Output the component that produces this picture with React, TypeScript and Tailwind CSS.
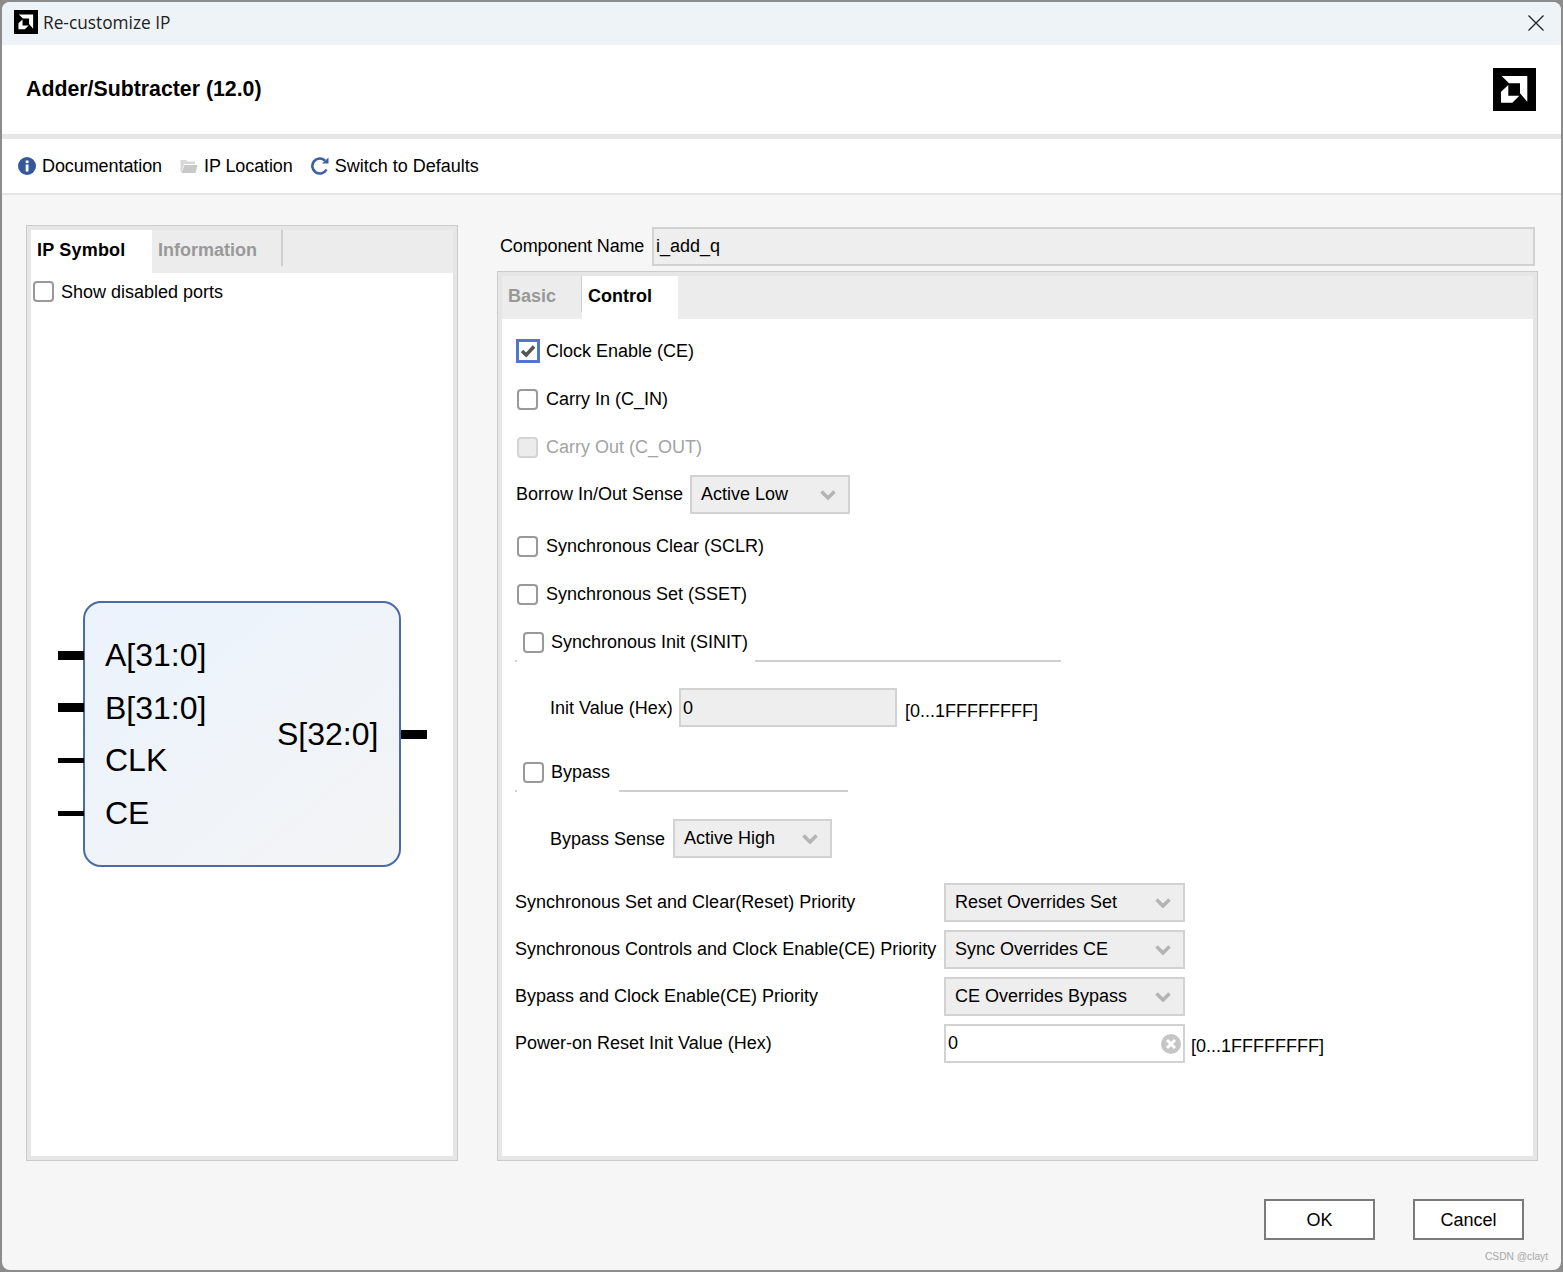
const FONT = '[font-family:"Liberation_Sans",Arial,sans-serif]';

function AmdLogo({ size }: { size: number }) {
  return (
    <svg width={size} height={size} viewBox="0 0 43 43" className="shrink-0">
      <rect width="43" height="43" fill="#000" />
      <path d="M8.7 8H34.3V33.7L27 25.3V15.3H16Z" fill="#fff" />
      <path d="M8 23.7L15.3 17V27.7H26.3L19.3 34.7H8Z" fill="#fff" />
    </svg>
  );
}

function Chevron() {
  return (
    <svg width="16" height="10" viewBox="0 0 16 10" className="shrink-0">
      <path d="M1.5 1.5L8 8L14.5 1.5" fill="none" stroke="#b4b4b4" strokeWidth="3.5" />
    </svg>
  );
}

function Box({ checked, disabled }: { checked?: boolean; disabled?: boolean }) {
  if (checked) {
    return (
      <span className="flex h-6 w-6 shrink-0 items-center justify-center border-[3px] border-[#4f78cc] bg-white">
        <svg width="16" height="14" viewBox="0 0 16 14">
          <path d="M2 7L6.2 11L14 2.5" fill="none" stroke="#555" strokeWidth="3.5" />
        </svg>
      </span>
    );
  }
  return (
    <span className={`h-[21px] w-[21px] shrink-0 rounded-[4px] border-2 ${disabled ? 'border-[#d4d4d4] bg-[#ececec]' : 'border-[#999] bg-white'}`} />
  );
}

function Check({ label, checked, disabled, className = '' }: { label: string; checked?: boolean; disabled?: boolean; className?: string }) {
  return (
    <div className={`flex h-6 items-center ${className}`}>
      <span className={`flex w-[30px] shrink-0 items-center ${checked ? '' : 'pl-[1px]'}`}>
        <Box checked={checked} disabled={disabled} />
      </span>
      <span className={disabled ? 'text-[#a3a3a3]' : ''}>{label}</span>
    </div>
  );
}

function Select({ value, className = '' }: { value: string; className?: string }) {
  return (
    <div className={`flex h-[39px] items-center justify-between border-2 border-[#d2d2d2] bg-[#eeeeee] pl-[9px] pr-[12px] ${className}`}>
      <span className="-mt-[2px]">{value}</span>
      <Chevron />
    </div>
  );
}

function SectionCheck({ label, gap, width }: { label: string; gap: number; width: number }) {
  return (
    <div>
      <Check label={label} className="pl-[7px] [&>span:first-child]:w-[29px]" />
      <div className="mt-[6px] flex h-[2px]">
        <span className="h-[2px] w-[2px] bg-[#cfcfcf]" />
        <span style={{ width: gap }} />
        <span className="h-[2px] bg-[#cfcfcf]" style={{ width }} />
      </div>
    </div>
  );
}

function Priority({ label, children }: { label: string; children: React.ReactNode }) {
  return (
    <div className="mt-2 flex items-center">
      <span className="-ml-[1px] -mt-[2px] w-[429px] shrink-0">{label}</span>
      {children}
    </div>
  );
}

function Port({ name, bus }: { name: string; bus?: boolean }) {
  return (
    <div className="flex h-[52.6px] items-center">
      <span className={`-ml-[27px] w-[26px] bg-black ${bus ? 'h-[9px]' : 'h-[5px]'}`} />
      <span className="ml-[21px] text-[32px] leading-none">{name}</span>
    </div>
  );
}

export default function App() {
  return (
    <div className={`h-[1272px] w-[1563px] overflow-hidden bg-[#8c8c8c] p-[2px] text-[18px] leading-none text-black ${FONT}`}>
      <div className="relative flex h-full flex-col overflow-hidden rounded-[8px] bg-[#f6f6f6]">
        <div className="flex h-[43px] shrink-0 items-center bg-[#eef3f7] pb-[3px] pl-[12px] pr-[17px]">
          <AmdLogo size={24} />
          <span className="ml-[5px] mt-[2px] font-['Open_Sans',sans-serif] text-[17.3px] text-[#222]">Re-customize IP</span>
          <svg width="16" height="16" viewBox="0 0 16 16" className="ml-auto mt-[2px]">
            <path d="M0.5 0.5L15.5 15.5M15.5 0.5L0.5 15.5" stroke="#222" strokeWidth="1.3" />
          </svg>
        </div>

        <div className="flex h-[89px] shrink-0 items-center justify-between bg-white pl-[24px] pr-[25px]">
          <h1 className="text-[21.3px] font-bold">Adder/Subtracter (12.0)</h1>
          <AmdLogo size={43} />
        </div>
        <div className="h-[5px] shrink-0 bg-[#e6e6e6]" />

        <div className="flex h-[54px] shrink-0 items-center bg-white pl-[16px]">
          <svg width="18" height="18" viewBox="0 0 18 18" className="mr-[6px]">
            <circle cx="9" cy="9" r="9" fill="#34589c" />
            <rect x="7.7" y="7.5" width="2.8" height="7" fill="#fff" />
            <rect x="7.7" y="3.5" width="2.8" height="2.6" fill="#fff" />
          </svg>
          <span className="tracking-[-0.08px]">Documentation</span>
          <svg width="18" height="16" viewBox="0 0 18 16" className="ml-[18px] mr-[6px]">
            <path d="M0.5 2H6L7.5 3.5H15V6H4L1.5 14H0.5Z" fill="#d8d8d8" />
            <path d="M4.5 7H17.5L15.5 15H1.5Z" fill="#c8c8c8" />
          </svg>
          <span className="tracking-[-0.1px]">IP Location</span>
          <svg width="18" height="18" viewBox="0 0 18 18" className="ml-[18px] mr-[6px]">
            <path d="M15.5 12.5A7.5 7.5 0 1 1 14 3.6" fill="none" stroke="#3c5f9f" strokeWidth="2.6" />
            <path d="M11 6.5H17.5V0.5Z" fill="#3c5f9f" />
          </svg>
          <span>Switch to Defaults</span>
        </div>
        <div className="h-[2px] shrink-0 bg-[#e6e6e6]" />

        <div className="flex gap-[39px] pl-[24px] pt-[30px]">
          {/* IP symbol panel */}
          <div className="flex h-[936px] w-[432px] shrink-0 flex-col border border-[#cccccc] bg-[#e6e6e6] p-1">
            <div className="flex h-[43px] shrink-0 bg-[#ececec]">
              <div className="flex w-[121px] items-center bg-white pb-[4px] pl-[6px] font-bold tracking-[0.2px]">IP Symbol</div>
              <div className="flex items-center pb-[4px] pl-[6px] font-bold text-[#999]">Information</div>
              <span className="ml-[24px] h-[36px] w-[2px] bg-[#cfcfcf]" />
            </div>
            <div className="flex-1 bg-white">
              <div className="mt-[8px] flex h-[21px] items-center pl-[2px]">
                <Box />
                <span className="ml-[7px]">Show disabled ports</span>
              </div>
              <div className="relative ml-[52px] mt-[299px] h-[266px] w-[318px] rounded-[18px] border-2 border-[#4a6ba8] bg-gradient-to-br from-[#ebf3fd] to-[#f3f4f5] pt-[26px]">
                <Port name="A[31:0]" bus />
                <Port name="B[31:0]" bus />
                <Port name="CLK" />
                <Port name="CE" />
                <div className="absolute left-[192px] top-[115px] text-[32px] leading-none">S[32:0]</div>
                <span className="absolute left-[316px] top-[127px] h-[9px] w-[26px] bg-black" />
              </div>
            </div>
          </div>

          {/* Configuration */}
          <div className="w-[1041px] shrink-0">
            <div className="flex h-[46px] items-start pt-[2px]">
              <span className="ml-[3px] mt-[10px] w-[152px] shrink-0 tracking-[-0.13px]">Component Name</span>
              <div className="flex h-[39px] w-[883px] items-center border-2 border-[#d2d2d2] bg-[#eeeeee] pb-[2px] pl-[2px]">i_add_q</div>
            </div>
            <div className="flex h-[890px] flex-col border border-[#cccccc] bg-[#e6e6e6] p-1">
              <div className="flex h-[43px] shrink-0 bg-[#ececec]">
                <div className="flex w-[79px] items-center pb-[4px] pl-[6px] font-bold text-[#999]">Basic</div>
                <span className="h-[36px] w-[1px] bg-[#cfcfcf]" />
                <div className="flex w-[96px] items-center bg-white pb-[4px] pl-[6px] font-bold">Control</div>
              </div>
              <div className="flex-1 bg-white pl-[14px] pt-[20px]">
                <Check label="Clock Enable (CE)" checked />
                <Check label="Carry In (C_IN)" className="mt-6" />
                <Check label="Carry Out (C_OUT)" disabled className="mt-6" />
                <div className="mt-[16px] flex items-center">
                  <span className="-mt-[2px] w-[174px]">Borrow In/Out Sense</span>
                  <Select value="Active Low" className="w-[160px]" />
                </div>
                <Check label="Synchronous Clear (SCLR)" className="mt-[20px]" />
                <Check label="Synchronous Set (SSET)" className="mt-6" />
                <div className="-ml-[1px] mt-6">
                  <SectionCheck label="Synchronous Init (SINIT)" gap={238} width={306} />
                </div>
                <div className="ml-[34px] mt-[26px] flex items-center">
                  <span className="w-[129px] shrink-0">Init Value (Hex)</span>
                  <div className="flex h-[39px] w-[218px] items-center border-2 border-[#d2d2d2] bg-[#eeeeee] pl-[2px]">0</div>
                  <span className="ml-[8px] mt-[6px]">[0...1FFFFFFFF]</span>
                </div>
                <div className="-ml-[1px] mt-[33px]">
                  <SectionCheck label="Bypass" gap={102} width={229} />
                </div>
                <div className="ml-[34px] mt-[27px] flex items-center">
                  <span className="w-[123px] shrink-0">Bypass Sense</span>
                  <Select value="Active High" className="w-[159px]" />
                </div>
                <div className="mt-[17px] flex flex-col">
                  <Priority label="Synchronous Set and Clear(Reset) Priority"><Select value="Reset Overrides Set" className="w-[241px]" /></Priority>
                  <Priority label="Synchronous Controls and Clock Enable(CE) Priority"><Select value="Sync Overrides CE" className="w-[241px]" /></Priority>
                  <Priority label="Bypass and Clock Enable(CE) Priority"><Select value="CE Overrides Bypass" className="w-[241px]" /></Priority>
                  <Priority label="Power-on Reset Init Value (Hex)">
                    <div className="flex h-[39px] w-[241px] items-center justify-between border-2 border-[#d2d2d2] bg-white pl-[2px] pr-[2px]">
                      <span className="-mt-[2px]">0</span>
                      <svg width="20" height="20" viewBox="0 0 20 20">
                        <circle cx="10" cy="10" r="10" fill="#c6c6c6" />
                        <path d="M6 6L14 14M14 6L6 14" stroke="#fff" strokeWidth="3" />
                      </svg>
                    </div>
                    <span className="ml-[6px] mt-[4px]">[0...1FFFFFFFF]</span>
                  </Priority>
                </div>
              </div>
            </div>
          </div>
        </div>

        <div className="flex justify-end gap-[38px] pr-[37px] pt-[38px]">
          <button className="h-[41px] w-[111px] border-2 border-[#7a7a7a] bg-white">OK</button>
          <button className="h-[41px] w-[111px] border-2 border-[#7a7a7a] bg-white">Cancel</button>
        </div>
        <span className="absolute bottom-[8px] right-[13px] text-[10.2px] text-[#a8a8a8]">CSDN @clayt</span>
      </div>
    </div>
  );
}
